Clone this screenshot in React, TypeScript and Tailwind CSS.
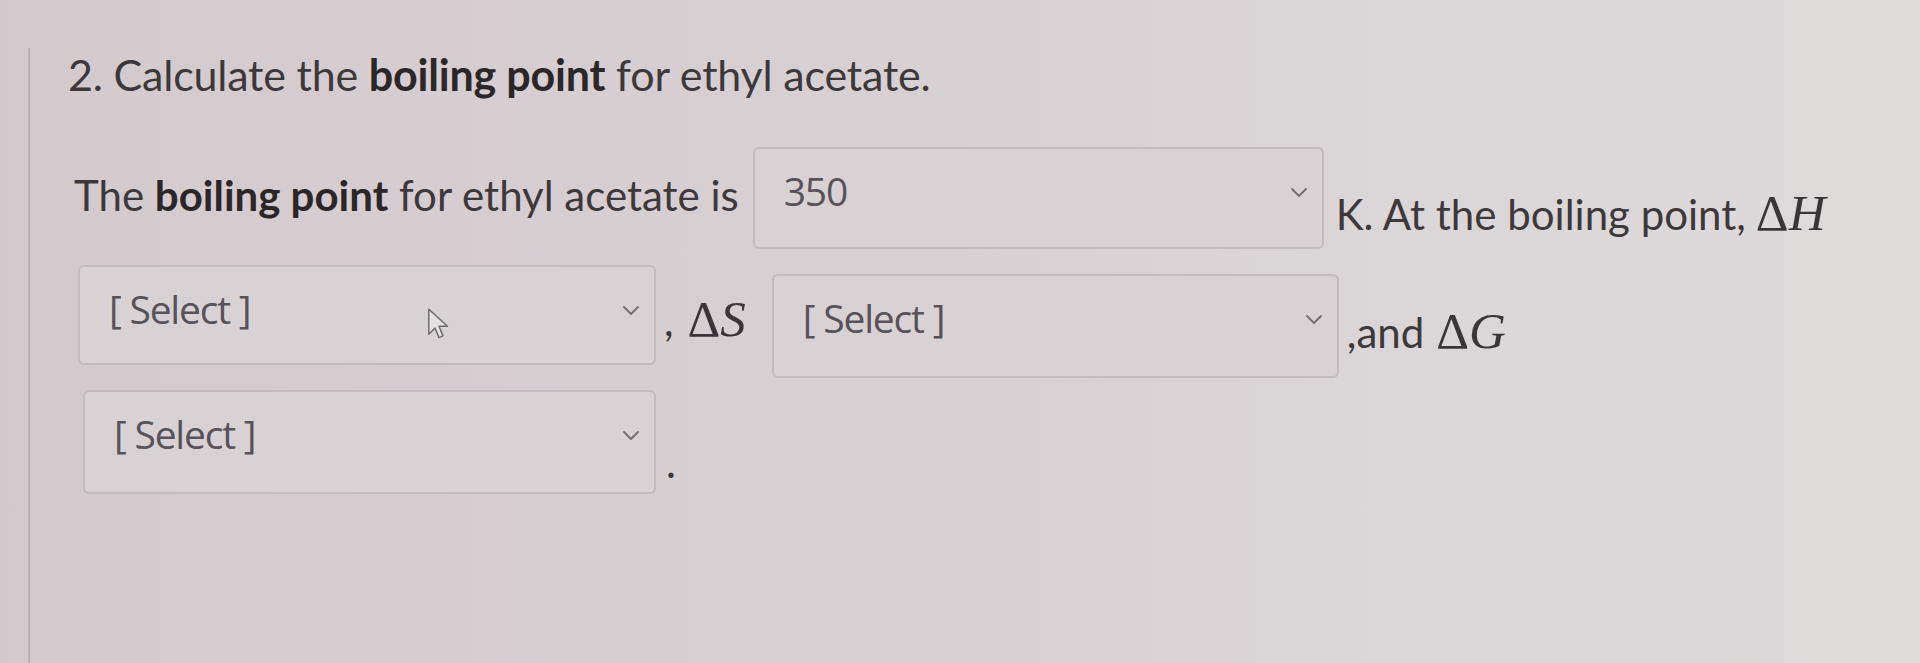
import React from "react";

// Quiz question: inline dropdowns inside a sentence (Canvas-style)

function Chevron() {
  return (
    <svg width="18" height="11" viewBox="0 0 18 11" fill="none" className="shrink-0">
      <path d="M2 2 L9 9 L16 2" stroke="#756e72" strokeWidth="1.9" strokeLinecap="round" strokeLinejoin="round" />
    </svg>
  );
}

function Cursor() {
  return (
    <svg width="26" height="34" viewBox="0 0 22 30" fill="none" className="absolute left-[346px] top-[40px]">
      <path
        d="M2 2 L2 24 L7.5 18.5 L11 27 L14.5 25.5 L11 17 L18.5 17 Z"
        fill="#e6e1e3"
        stroke="#6e686b"
        strokeWidth="1.3"
        strokeLinejoin="round"
      />
    </svg>
  );
}

function Dropdown({
  value,
  width,
  height,
  children,
}: {
  value: string;
  width: string;
  height: string;
  children?: React.ReactNode;
}) {
  return (
    <div
      className={`relative flex shrink-0 items-start justify-between rounded-[6px] border-2 border-[#c3bbbf] bg-[#d9d2d5] pl-[29px] pr-[14px] pt-[18px] ${width} ${height}`}
    >
      <span className="text-[39px] leading-[48px] text-[#58525a] font-['Open_Sans',sans-serif] tracking-[-1.2px]">{value}</span>
      <span className="mt-[20px]">
        <Chevron />
      </span>
      {children}
    </div>
  );
}

function Math({ sym }: { sym: string }) {
  return (
    <span className="font-['Liberation_Serif',serif] text-[51px] text-[#3a3538]">
      Δ<span className="italic">{sym}</span>
    </span>
  );
}

export default function App() {
  return (
    <div className="h-[663px] w-[1920px] overflow-hidden bg-gradient-to-r from-[#d3cace] via-[#d8d1d4] to-[#dedbdb] font-['Lato',sans-serif] text-[#3d393b]">
      <div className="ml-[28px] h-[656px] border-b-2 border-l-2 border-[#bab2b6] pl-[38px]">
        <h2 className="mt-[48px] text-[43px] leading-[54px] tracking-[-0.2px]">
          2. Calculate the <b className="font-bold text-[#2b2729]">boiling point</b> for ethyl acetate.
        </h2>

        <div className="mt-[45px] flex items-start pl-[6px]">
          <p className="mt-[22px] text-[42px] leading-[52px]">
            The <b className="font-bold text-[#2b2729]">boiling point</b> for ethyl acetate is
          </p>
          <div className="ml-[14px]">
            <Dropdown value="350" width="w-[571px]" height="h-[102px]" />
          </div>
          <p className="ml-[12px] mt-[40px] flex items-baseline gap-[10px] text-[42px] leading-[52px]">
            <span>K. At the boiling point,</span>
            <Math sym="H" />
          </p>
        </div>

        <div className="mt-[16px] flex items-start pl-[10px]">
          <Dropdown value="[ Select ]" width="w-[578px]" height="h-[100px]">
            <Cursor />
          </Dropdown>
          <p className="ml-[8px] mt-[28px] flex items-baseline gap-[14px] text-[42px] leading-[52px]">
            <span>,</span>
            <Math sym="S" />
          </p>
          <div className="ml-[26px] mt-[9px]">
            <Dropdown value="[ Select ]" width="w-[567px]" height="h-[104px]" />
          </div>
          <p className="ml-[8px] mt-[40px] flex items-baseline gap-[12px] text-[42px] leading-[52px]">
            <span>,and</span>
            <Math sym="G" />
          </p>
        </div>

        <div className="mt-[12px] flex items-start pl-[15px]">
          <Dropdown value="[ Select ]" width="w-[573px]" height="h-[104px]" />
          <span className="ml-[10px] mt-[46px] text-[42px] leading-[52px]">.</span>
        </div>
      </div>
    </div>
  );
}
